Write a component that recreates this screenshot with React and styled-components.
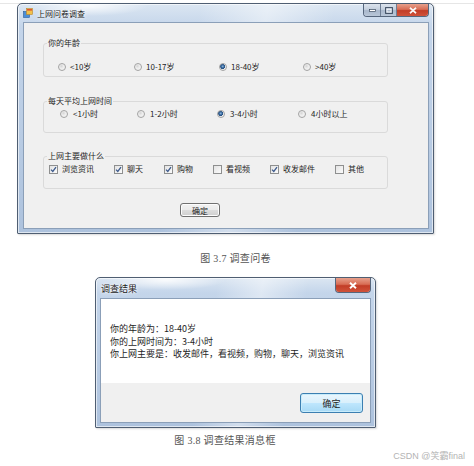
import React from 'react';
import styled, { createGlobalStyle } from 'styled-components';

const Global = createGlobalStyle`
  html, body { margin: 0; padding: 0; background: #fff; }
  body { font-family: "Noto Sans CJK SC", "Noto Sans", sans-serif; color: #1e1e1e; }
`;

const Page = styled.div`
  width: 474px;
  height: 466px;
  overflow: hidden;
  display: flex;
  flex-direction: column;
  background: linear-gradient(#e6e6e6, #e6e6e6) 0 3px / 100% 1px no-repeat, #fff;
`;

/* Aero-style window frame */
const Frame = styled.div`
  box-sizing: border-box;
  width: ${p => p.$w}px;
  height: ${p => p.$h}px;
  margin: ${p => p.$top}px 0 0 ${p => p.$left}px;
  border: 1px solid #4f5e72;
  border-radius: 5px 5px 1px 1px;
  padding: 0 4px 4px ${p => p.$padLeft}px;
  display: flex;
  flex-direction: column;
  background:
    radial-gradient(ellipse 60px 10px at 70px 2px, rgba(255,255,255,.85), rgba(255,255,255,0)),
    linear-gradient(100deg, rgba(255,255,255,0) 40%, rgba(255,255,255,.45) 55%, rgba(255,255,255,0) 70%),
    linear-gradient(180deg, #dbe6f2 0%, #c4d5ea 10%, #b8cbe3 60%, #adc2dd 100%);
  box-shadow: inset 0 0 0 1px rgba(255,255,255,.6), 1px 1px 2px rgba(0,0,0,.15);
`;

const TitleBar = styled.div`
  height: ${p => p.$h}px;
  display: flex;
  align-items: flex-start;
  flex-shrink: 0;
`;

const TitleText = styled.span`
  font-size: ${p => p.$size}px;
  line-height: 12px;
  margin-top: ${p => p.$top}px;
  margin-left: ${p => p.$left}px;
  color: #1b1b1b;
  text-shadow: 0 0 4px #fff, 0 0 2px #fff;
`;

const AppIcon = styled.svg`
  margin-top: 4px;
  flex-shrink: 0;
`;

const CaptionGroup = styled.div`
  margin-left: auto;
  display: flex;
  height: ${p => p.$h}px;
  border: 1px solid #56667c;
  border-top: none;
  border-radius: 0 0 4px 4px;
  overflow: hidden;
`;

const CaptionButton = styled.div`
  width: ${p => p.$w}px;
  display: flex;
  align-items: center;
  justify-content: center;
  border-left: ${p => (p.$first ? 'none' : '1px solid #6f7f95')};
  background: ${p =>
    p.$close
      ? 'linear-gradient(180deg, #e7a08c 0%, #d86d55 45%, #c23d27 55%, #d0523a 100%)'
      : 'linear-gradient(180deg, #dde4ed 0%, #c5d0de 45%, #a9b8cc 55%, #b9c7d8 100%)'};
`;

const Client = styled.div`
  flex: 1;
  display: flex;
  flex-direction: column;
  border: 1px solid #8b9fb8;
  background: #f0f0f0;
  padding-left: ${p => p.$padLeft || 0}px;
`;

const GroupBox = styled.fieldset`
  width: 345px;
  box-sizing: border-box;
  margin: ${p => p.$mt}px 0 0 0;
  padding: ${p => p.$pt}px 0 ${p => p.$pb}px 0;
  border: 1px solid #dadada;
  border-radius: 3px;
  min-inline-size: 0;
`;

const Legend = styled.legend`
  font-size: 8px;
  line-height: 10px;
  padding: 0 1px;
  margin-left: 3px;
  color: #1e1e1e;
`;

const OptionRow = styled.div`
  display: grid;
  grid-template-columns: ${p => p.$cols};
  padding-left: ${p => p.$pl}px;
  height: 10px;
  align-items: center;
`;

const Option = styled.label`
  display: flex;
  align-items: center;
  gap: ${p => p.$gap}px;
  font-size: 8px;
  line-height: 10px;
  white-space: nowrap;
`;

const RadioDot = styled.span`
  width: 8px;
  height: 8px;
  box-sizing: border-box;
  border-radius: 50%;
  border: 1px solid #a3a3a3;
  background: ${p =>
    p.$on
      ? 'radial-gradient(circle at 45% 40%, #8fb8e0 0, #2f5f94 1.6px, #254f80 2.4px, #e9e9e9 2.6px, #fbfbfb 100%)'
      : 'radial-gradient(circle at 40% 35%, #d4d4d4 0, #ececec 2px, #fafafa 100%)'};
  flex-shrink: 0;
`;

const CheckBox = styled.span`
  width: 9px;
  height: 9px;
  box-sizing: border-box;
  border: 1px solid #8e8f8f;
  background: linear-gradient(135deg, #e3e3e3, #fbfbfb);
  display: flex;
  align-items: center;
  justify-content: center;
  flex-shrink: 0;
`;

const PushButton = styled.button`
  box-sizing: border-box;
  width: ${p => p.$w}px;
  height: ${p => p.$h}px;
  margin: ${p => p.$margin};
  padding: 0;
  font-family: inherit;
  font-size: ${p => p.$size}px;
  color: #1e1e1e;
  border-radius: 3px;
  border: 1px solid ${p => (p.$focus ? '#3c7fb1' : '#707070')};
  background: ${p =>
    p.$focus
      ? 'linear-gradient(180deg, #eaf6fd 0%, #d9f0fc 48%, #bee6fd 52%, #a7d9f5 100%)'
      : 'linear-gradient(180deg, #f2f2f2 0%, #ebebeb 48%, #dddddd 52%, #cfcfcf 100%)'};
  box-shadow: inset 0 0 0 1px ${p => (p.$focus ? '#c8ecfb' : '#fcfcfc')};
  flex-shrink: 0;
  align-self: flex-start;
`;

const Caption = styled.div`
  font-family: "Liberation Serif", "Noto Sans CJK SC", serif;
  font-size: 10px;
  line-height: 14px;
  color: #555;
  text-align: center;
  margin-top: ${p => p.$mt}px;
  padding-right: ${p => p.$pr}px;
  letter-spacing: 0.3px;
`;

const MessageBody = styled.div`
  height: 84px;
  box-sizing: border-box;
  background: #fff;
  padding: 24px 0 0 9px;
  font-size: 9px;
  line-height: 12.5px;
  color: #1e1e1e;
`;

const MessageFooter = styled.div`
  flex: 1;
  background: #f0f0f0;
  display: flex;
  justify-content: flex-end;
  padding: 10px 7px 0 0;
`;

const Watermark = styled.div`
  font-family: "Liberation Sans", "Noto Sans CJK SC", sans-serif;
  font-size: 9px;
  line-height: 12px;
  color: #b3b3b3;
  text-align: right;
  margin-top: 2px;
  padding-right: 9px;
`;

const Check = () => (
  <svg width="7" height="7" viewBox="0 0 7 7">
    <path d="M1 3.6 L2.8 5.4 L6 1.2" fill="none" stroke="#3d5a8c" strokeWidth="1.3" />
  </svg>
);

const ages = [
  { t: '<10岁', on: false },
  { t: '10-17岁', on: false },
  { t: '18-40岁', on: true },
  { t: '>40岁', on: false },
];

const hours = [
  { t: '<1小时', on: false },
  { t: '1-2小时', on: false },
  { t: '3-4小时', on: true },
  { t: '4小时以上', on: false },
];

const uses = [
  { t: '浏览资讯', on: true },
  { t: '聊天', on: true },
  { t: '购物', on: true },
  { t: '看视频', on: false },
  { t: '收发邮件', on: true },
  { t: '其他', on: false },
];

function Survey() {
  return (
    <Frame $w={417} $h={231} $top={3} $left={17} $padLeft={5}>
      <TitleBar $h={18}>
        <AppIcon width="10" height="10" viewBox="0 0 10 10">
          <rect x="0.5" y="3.5" width="6" height="6" fill="#4b8fd6" stroke="#2c5d99" strokeWidth="0.6" />
          <rect x="3.5" y="0.5" width="6" height="6" fill="#f2c14a" stroke="#b9862a" strokeWidth="0.6" />
          <rect x="4" y="1" width="5" height="1.6" fill="#e0572f" />
        </AppIcon>
        <TitleText $size={8} $top={4} $left={4}>上网问卷调查</TitleText>
        <CaptionGroup $h={12}>
          <CaptionButton $w={16} $first>
            <svg width="7" height="3" viewBox="0 0 7 3">
              <rect x="0.5" y="0.5" width="6" height="2" fill="#fff" stroke="#3b4a5e" strokeWidth="0.7" />
            </svg>
          </CaptionButton>
          <CaptionButton $w={15}>
            <svg width="8" height="7" viewBox="0 0 8 7">
              <rect x="0.6" y="0.6" width="6.8" height="5.8" fill="none" stroke="#3b4a5e" strokeWidth="1" />
              <rect x="2" y="2.2" width="4" height="2.8" fill="none" stroke="#fff" strokeWidth="0.8" />
            </svg>
          </CaptionButton>
          <CaptionButton $w={31} $close>
            <svg width="8" height="7" viewBox="0 0 8 7">
              <path d="M1 0.8 L7 6.2 M7 0.8 L1 6.2" stroke="#fff" strokeWidth="1.8" />
              <path d="M1 0.8 L7 6.2 M7 0.8 L1 6.2" stroke="#f4f4f4" strokeWidth="1" />
            </svg>
          </CaptionButton>
        </CaptionGroup>
      </TitleBar>
      <Client $padLeft={19}>
        <GroupBox $mt={15} $pt={14} $pb={4}>
          <Legend>你的年龄</Legend>
          <OptionRow $cols="76px 85px 84px 1fr" $pl={14}>
            {ages.map(o => (
              <Option key={o.t} $gap={4}>
                <RadioDot $on={o.on} />
                {o.t}
              </Option>
            ))}
          </OptionRow>
        </GroupBox>
        <GroupBox $mt={19} $pt={3} $pb={13}>
          <Legend>每天平均上网时间</Legend>
          <OptionRow $cols="77px 80px 81px 1fr" $pl={16}>
            {hours.map(o => (
              <Option key={o.t} $gap={5}>
                <RadioDot $on={o.on} />
                {o.t}
              </Option>
            ))}
          </OptionRow>
        </GroupBox>
        <GroupBox $mt={18} $pt={3} $pb={14}>
          <Legend>上网主要做什么</Legend>
          <OptionRow $cols="65px 50px 49px 57px 65px 1fr" $pl={5}>
            {uses.map(o => (
              <Option key={o.t} $gap={4}>
                <CheckBox>{o.on && <Check />}</CheckBox>
                {o.t}
              </Option>
            ))}
          </OptionRow>
        </GroupBox>
        <PushButton $w={40} $h={14} $size={8} $margin="14px 0 0 137px">确定</PushButton>
      </Client>
    </Frame>
  );
}

function ResultDialog() {
  return (
    <Frame $w={281} $h={151} $top={11} $left={95} $padLeft={4}>
      <TitleBar $h={20}>
        <TitleText $size={9} $top={5} $left={1}>调查结果</TitleText>
        <CaptionGroup $h={14}>
          <CaptionButton $w={34} $first $close>
            <svg width="8" height="7" viewBox="0 0 8 7">
              <path d="M1 0.8 L7 6.2 M7 0.8 L1 6.2" stroke="#fff" strokeWidth="1.9" />
            </svg>
          </CaptionButton>
        </CaptionGroup>
      </TitleBar>
      <Client>
        <MessageBody>
          <div>你的年龄为：18-40岁</div>
          <div>你的上网时间为：3-4小时</div>
          <div>你上网主要是：收发邮件，看视频，购物，聊天，浏览资讯</div>
        </MessageBody>
        <MessageFooter>
          <PushButton $w={63} $h={20} $size={9} $margin="0" $focus>确定</PushButton>
        </MessageFooter>
      </Client>
    </Frame>
  );
}

export default function App() {
  return (
    <Page>
      <Global />
      <Survey />
      <Caption $mt={18} $pr={3}>图 3.7 调查问卷</Caption>
      <ResultDialog />
      <Caption $mt={6} $pr={24}>图 3.8 调查结果消息框</Caption>
      <Watermark>CSDN @笑霸final</Watermark>
    </Page>
  );
}
